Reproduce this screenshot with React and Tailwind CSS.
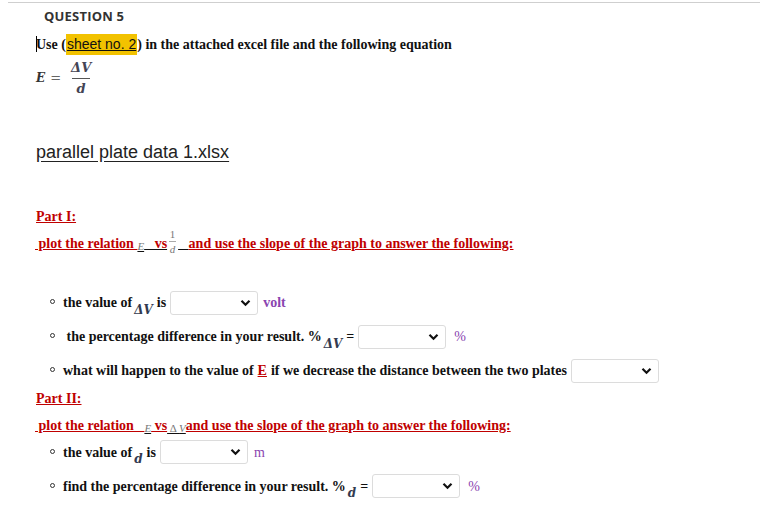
import React from "react";

const serif = { fontFamily: '"Liberation Serif", "Times New Roman", serif' };

const Select = ({ w = "w-[88px]" }) => (
  <span
    className={`inline-flex items-center justify-end ${w} h-[24px] border border-[#dcdcdc] rounded-[3px] bg-white align-middle pr-[6px]`}
  >
    <svg width="11" height="8" viewBox="0 0 11 8" fill="none">
      <path d="M1.5 1.8 L5.5 5.8 L9.5 1.8" stroke="#111" strokeWidth="2.2" />
    </svg>
  </span>
);

const Bullet = () => (
  <span className="inline-block w-[5px] h-[5px] rounded-full border border-[#333] mr-[8px] align-middle relative top-[-1px]" />
);

const Sym = ({ children }) => (
  <span
    className="font-bold italic text-[#333a50] text-[12px] relative top-[7px] ml-[2px] mr-[4px]"
    style={{ fontFamily: '"DejaVu Serif", serif' }}
  >
    {children}
  </span>
);

const Item = ({ children, className = "" }) => (
  <div className={`flex items-center h-[34px] pl-[50px] ${className}`}>
    <Bullet />
    <div className="flex items-center whitespace-nowrap">{children}</div>
  </div>
);

const PlotLine = ({ children }) => (
  <div className="pl-[35px] text-[14px] font-bold text-[#c00000] whitespace-nowrap flex items-start">
    {children}
  </div>
);

export default function App() {
  return (
    <div className="w-[760px] h-[529px] bg-white overflow-hidden text-[#111]" style={serif}>
      <div className="mt-[2px] ml-[8px] h-px bg-[#cfcfcf]" />

      <div
        className="pl-[44px] pt-[4px] text-[13px] font-bold text-[#333] tracking-[0.2px]"
        style={{ fontFamily: '"Open Sans", sans-serif' }}
      >
        QUESTION 5
      </div>

      <div className="pl-[36px] mt-[7px] text-[14px] font-bold flex items-center">
        <span className="w-px h-[16px] bg-black mr-[-1px]" />
        <span>Use (</span>
        <span
          className="bg-[#f2c200] underline font-normal text-[14px] px-[1px]"
          style={{ fontFamily: '"Liberation Sans", Arial, sans-serif' }}
        >
          sheet no. 2
        </span>
        <span>) in the attached excel file and the following equation</span>
      </div>

      <div className="pl-[36px] mt-[5px] flex items-center text-[#333]" style={{ fontFamily: '"DejaVu Serif", serif' }}>
        <span className="font-bold italic text-[12px]">E</span>
        <span className="mx-[5px] text-[13px] text-[#666]">=</span>
        <span className="flex flex-col items-center ml-[5px]">
          <span className="font-bold italic text-[13px] leading-[16px] text-[#445]">ΔV</span>
          <span className="w-[18px] h-px bg-[#555] my-[2px]" />
          <span className="font-bold italic text-[13px] leading-[15px] text-[#445]">d</span>
        </span>
      </div>

      <div
        className="pl-[36px] mt-[43px] text-[18px] text-[#222] underline underline-offset-[3px]"
        style={{ fontFamily: '"Liberation Sans", Arial, sans-serif' }}
      >
        parallel plate data 1.xlsx
      </div>

      <div className="pl-[36px] mt-[40px] text-[14px] font-bold text-[#c00000] underline">Part I:</div>

      <PlotLine>
        <span className="underline mt-[6px]">&nbsp;plot the relation&nbsp;</span>
        <span className="italic font-normal text-[11px] text-[#777] mt-[11px] underline decoration-[#111]">E</span>
        <span className="underline mt-[6px] decoration-[#111]">&nbsp;&nbsp;&nbsp;vs</span>
        <span className="flex flex-col items-center font-normal text-[11px] text-[#777] leading-[12px] mt-[1px] mx-[2px]">
          <span>1</span>
          <span className="w-[7px] h-px bg-[#aaa] my-[1px]" />
          <span className="italic">d</span>
        </span>
        <span className="underline mt-[6px] decoration-[#111]">&nbsp;&nbsp;&nbsp;</span>
        <span className="underline mt-[6px]">and use the slope of the graph to answer the following:</span>
      </PlotLine>

      <div className="mt-[31px] text-[14px] font-bold">
        <Item>
          <span>the value of</span>
          <Sym>ΔV</Sym>
          <span className="mr-[4px]">is</span>
          <Select />
          <span className="ml-[5px] text-[#8a45b0]">volt</span>
        </Item>
        <Item>
          <span>&nbsp;the percentage difference in your result. %</span>
          <Sym>ΔV</Sym>
          <span className="mr-[4px]">=</span>
          <Select />
          <span className="ml-[8px] text-[#8a45b0] font-normal">%</span>
        </Item>
        <Item>
          <span>what will happen to the value of </span>
          <span className="text-[#c00000] underline mx-[4px]">E</span>
          <span className="mr-[4px]">if we decrease the distance between the two plates</span>
          <Select />
        </Item>
      </div>

      <div className="pl-[36px] mt-[0px] text-[14px] font-bold text-[#c00000] underline">Part II:</div>

      <PlotLine>
        <span className="underline mt-[6px]">&nbsp;plot the relation&nbsp;&nbsp;&nbsp;</span>
        <span className="italic font-normal text-[11px] text-[#777] mt-[11px] underline decoration-[#111]">E</span>
        <span className="underline mt-[6px]">&nbsp;vs</span>
        <span className="font-normal text-[11px] text-[#777] mt-[11px] underline decoration-[#111]">
          &nbsp;Δ <span className="italic">V</span>
        </span>
        <span className="underline mt-[6px]">and use the slope of the graph to answer the following:</span>
      </PlotLine>

      <div className="-mt-[1px] text-[14px] font-bold">
        <Item>
          <span>the value of</span>
          <Sym>d</Sym>
          <span className="mr-[4px]">is</span>
          <Select />
          <span className="ml-[6px] text-[#8a45b0] font-normal">m</span>
        </Item>
        <Item>
          <span>find the percentage difference in your result. %</span>
          <Sym>d</Sym>
          <span className="mr-[4px]">=</span>
          <Select />
          <span className="ml-[8px] text-[#8a45b0] font-normal">%</span>
        </Item>
      </div>
    </div>
  );
}
